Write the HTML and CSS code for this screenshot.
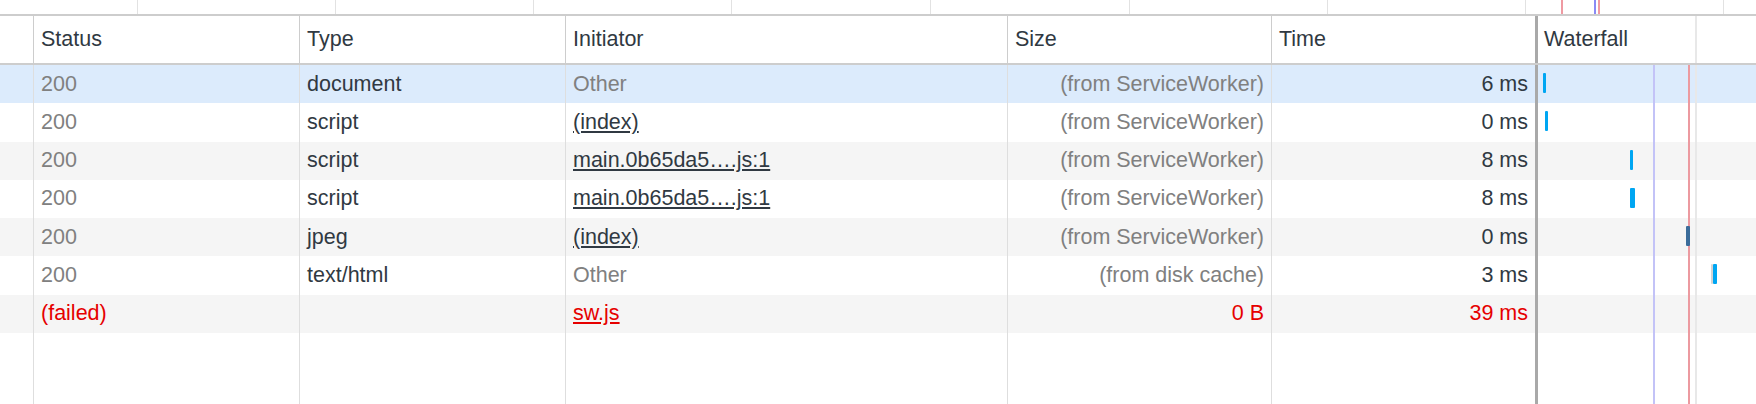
FILE: index.html
```html
<!DOCTYPE html>
<html>
<head>
<meta charset="utf-8">
<link rel="stylesheet" href="styles.css">
</head>
<body>
<div class="panel">
  <div class="overview">
    <span class="tick" style="left:137px"></span>
    <span class="tick" style="left:335px"></span>
    <span class="tick" style="left:533px"></span>
    <span class="tick" style="left:731px"></span>
    <span class="tick" style="left:930px"></span>
    <span class="tick" style="left:1129px"></span>
    <span class="tick" style="left:1327px"></span>
    <span class="tick" style="left:1525px"></span>
    <span class="tick" style="left:1723px"></span>
    <span class="mark red" style="left:1561px"></span>
    <span class="mark blue" style="left:1594px"></span>
    <span class="mark red" style="left:1598px"></span>
  </div>
  <div class="grid">
    <div class="row head">
      <div class="cell"></div>
      <div class="cell">Status</div>
      <div class="cell">Type</div>
      <div class="cell">Initiator</div>
      <div class="cell">Size</div>
      <div class="cell">Time</div>
      <div class="cell wf">Waterfall<span class="wline grey"></span></div>
    </div>
    <div class="row selected">
      <div class="cell"></div>
      <div class="cell dim">200</div>
      <div class="cell">document</div>
      <div class="cell dim">Other</div>
      <div class="cell dim right">(from ServiceWorker)</div>
      <div class="cell right">6 ms</div>
      <div class="cell wf"><span class="wline blue"></span><span class="wline red"></span><span class="wline grey"></span><span class="bar" style="left:5px;width:3px"></span></div>
    </div>
    <div class="row">
      <div class="cell"></div>
      <div class="cell dim">200</div>
      <div class="cell">script</div>
      <div class="cell"><span class="link">(index)</span></div>
      <div class="cell dim right">(from ServiceWorker)</div>
      <div class="cell right">0 ms</div>
      <div class="cell wf"><span class="wline blue"></span><span class="wline red"></span><span class="wline grey"></span><span class="bar" style="left:7px;width:3px"></span></div>
    </div>
    <div class="row alt">
      <div class="cell"></div>
      <div class="cell dim">200</div>
      <div class="cell">script</div>
      <div class="cell"><span class="link">main.0b65da5….js:1</span></div>
      <div class="cell dim right">(from ServiceWorker)</div>
      <div class="cell right">8 ms</div>
      <div class="cell wf"><span class="wline blue"></span><span class="wline red"></span><span class="wline grey"></span><span class="bar" style="left:92px;width:3px"></span></div>
    </div>
    <div class="row">
      <div class="cell"></div>
      <div class="cell dim">200</div>
      <div class="cell">script</div>
      <div class="cell"><span class="link">main.0b65da5….js:1</span></div>
      <div class="cell dim right">(from ServiceWorker)</div>
      <div class="cell right">8 ms</div>
      <div class="cell wf"><span class="wline blue"></span><span class="wline red"></span><span class="wline grey"></span><span class="bar" style="left:92px;width:5px"></span></div>
    </div>
    <div class="row alt">
      <div class="cell"></div>
      <div class="cell dim">200</div>
      <div class="cell">jpeg</div>
      <div class="cell"><span class="link">(index)</span></div>
      <div class="cell dim right">(from ServiceWorker)</div>
      <div class="cell right">0 ms</div>
      <div class="cell wf"><span class="wline blue"></span><span class="wline red"></span><span class="wline grey"></span><span class="bar dark" style="left:148px;width:4px"></span></div>
    </div>
    <div class="row">
      <div class="cell"></div>
      <div class="cell dim">200</div>
      <div class="cell">text/html</div>
      <div class="cell dim">Other</div>
      <div class="cell dim right">(from disk cache)</div>
      <div class="cell right">3 ms</div>
      <div class="cell wf"><span class="wline blue"></span><span class="wline red"></span><span class="wline grey"></span><span class="bar wait" style="left:173px;width:2px"></span><span class="bar" style="left:175px;width:4px"></span></div>
    </div>
    <div class="row alt">
      <div class="cell"></div>
      <div class="cell err">(failed)</div>
      <div class="cell"></div>
      <div class="cell"><span class="link err">sw.js</span></div>
      <div class="cell err right">0 B</div>
      <div class="cell err right">39 ms</div>
      <div class="cell wf"><span class="wline blue"></span><span class="wline red"></span><span class="wline grey"></span></div>
    </div>
    <div class="row filler">
      <div class="cell"></div>
      <div class="cell"></div>
      <div class="cell"></div>
      <div class="cell"></div>
      <div class="cell"></div>
      <div class="cell"></div>
      <div class="cell wf"><span class="wline blue"></span><span class="wline red"></span><span class="wline grey"></span></div>
    </div>
  </div>
</div>
</body>
</html>
```
FILE: styles.css
```css
html, body {
  margin: 0;
  padding: 0;
  background: #fff;
  overflow: hidden;
}
body {
  width: 1756px;
  height: 404px;
  font-family: "Liberation Sans", Arial, Helvetica, sans-serif;
  font-size: 21.5px;
  color: #303942;
}
.panel {
  display: flex;
  flex-direction: column;
  height: 404px;
}
.overview {
  position: relative;
  height: 14px;
  border-bottom: 2px solid #cdcdcd;
  flex: none;
}
.tick {
  position: absolute;
  top: 0;
  bottom: 0;
  width: 1px;
  background: #e2e2e2;
}
.mark {
  position: absolute;
  top: 0;
  bottom: 0;
  width: 2px;
}
.mark.red { background: #ef9aa2; }
.mark.blue { background: #8a8af5; }
.grid {
  flex: 1;
  display: flex;
  flex-direction: column;
}
.row {
  display: grid;
  grid-template-columns: 33px 266px 266px 442px 264px 264px 221px;
  height: 38.25px;
  flex: none;
  align-items: stretch;
}
.row.head {
  height: 47px;
  border-bottom: 2px solid #cdcdcd;
}
.row.selected { background: #dcebfc; }
.row.alt { background: #f5f5f5; }
.row.filler { flex: 1; height: auto; }
.cell {
  position: relative;
  display: flex;
  align-items: center;
  padding: 0 7px 0 7px;
  border-left: 1px solid #dedede;
  white-space: nowrap;
  overflow: hidden;
}
.row .cell:first-child { border-left: none; }
.head .cell { border-left-color: #cdcdcd; }
.cell.right { justify-content: flex-end; }
.cell.wf {
  border-left: 3px solid #a9a9a9;
  padding-left: 6px;
}
.dim { color: #808080; }
.err { color: #e60000; }
.link {
  text-decoration: underline;
  color: #303942;
}
.link.err { color: #e60000; }
.wline {
  position: absolute;
  top: 0;
  bottom: 0;
  width: 2px;
}
.wline.blue { left: 115px; background: #c3c3f7; }
.wline.red { left: 150px; background: #ec9aa0; }
.wline.grey { left: 157px; background: #e8e8e8; }
.bar {
  position: absolute;
  top: 8px;
  height: 20px;
  background: #00a6f2;
  border-radius: 1px;
}
.bar.dark { background: #3b6c9a; }
.bar.wait { background: #d4d4d4; }
```
